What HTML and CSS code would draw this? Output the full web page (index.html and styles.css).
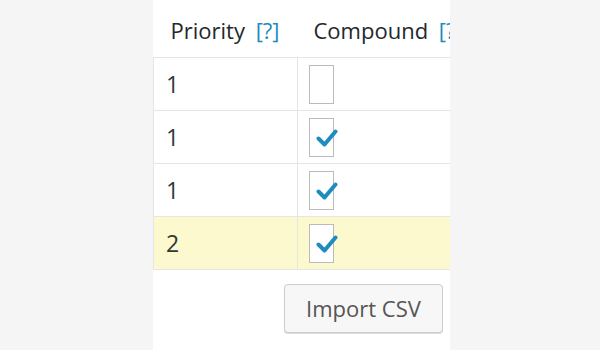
FILE: index.html
```html
<!DOCTYPE html>
<html lang="en">
<head>
    <meta charset="UTF-8">
    <title>Rates</title>
    <link rel="stylesheet" href="styles.css">
</head>
<body>
    <div class="panel">
        <table class="rates">
            <thead>
                <tr>
                    <th class="col-priority">Priority <a href="#">[?]</a></th>
                    <th class="col-compound">Compound <a href="#">[?]</a></th>
                </tr>
            </thead>
            <tbody>
                <tr>
                    <td>1</td>
                    <td><span class="check"></span></td>
                </tr>
                <tr>
                    <td>1</td>
                    <td><span class="check checked"><svg viewBox="0 0 22 20"><path d="M2.5 10.5 L8.5 16.5 L19.5 3.5"/></svg></span></td>
                </tr>
                <tr>
                    <td>1</td>
                    <td><span class="check checked"><svg viewBox="0 0 22 20"><path d="M2.5 10.5 L8.5 16.5 L19.5 3.5"/></svg></span></td>
                </tr>
                <tr class="current">
                    <td>2</td>
                    <td><span class="check checked"><svg viewBox="0 0 22 20"><path d="M2.5 10.5 L8.5 16.5 L19.5 3.5"/></svg></span></td>
                </tr>
            </tbody>
        </table>
        <div class="actions">
            <button>Import CSV</button>
        </div>
    </div>
</body>
</html>
```

FILE: styles.css
```css
/* Estilo general */
body { margin: 0; font-family: "Open Sans", sans-serif; background-color: #f5f5f5; color: #32373c; }
.panel { margin-left: 153px; width: 297px; height: 350px; background-color: white; overflow: hidden; }

/* Tabla */
.rates { border-collapse: collapse; width: 420px; table-layout: fixed; }
.rates th { height: 57px; padding: 3px 0 0 17px; text-align: left; font-weight: normal; font-size: 22px; color: #23282d; border: none; box-sizing: border-box; white-space: nowrap; }
.rates th a { color: #1e8cbe; text-decoration: none; margin-left: 5px; }
.rates .col-priority { width: 144px; }
.rates .col-compound { padding-left: 16px; }
.rates td { height: 53px; padding: 0 0 0 12px; font-size: 23px; color: #32373c; border: 1px solid #e5e5e5; box-sizing: border-box; }
.rates td + td { padding-left: 11px; }
.rates tr.current td { background-color: #fcf9cf; }

/* Casillas */
.check { display: block; position: relative; width: 23px; height: 37px; border: 1px solid #bbb; background-color: white; margin-top: 2px; }
.check svg { position: absolute; left: 6px; top: 9px; width: 22px; height: 20px; }
.check svg path { fill: none; stroke: #1e8cbe; stroke-width: 4; stroke-linecap: round; stroke-linejoin: round; }

/* Botón */
.actions { display: flex; justify-content: flex-end; padding: 14px 7px 0 0; }
.actions button { font-family: "Open Sans", sans-serif; font-size: 22px; color: #555; background-color: #f7f7f7; border: 1px solid #ccc; border-radius: 4px; width: 159px; height: 49px; box-shadow: 0 1px 0 #ddd; }
```
